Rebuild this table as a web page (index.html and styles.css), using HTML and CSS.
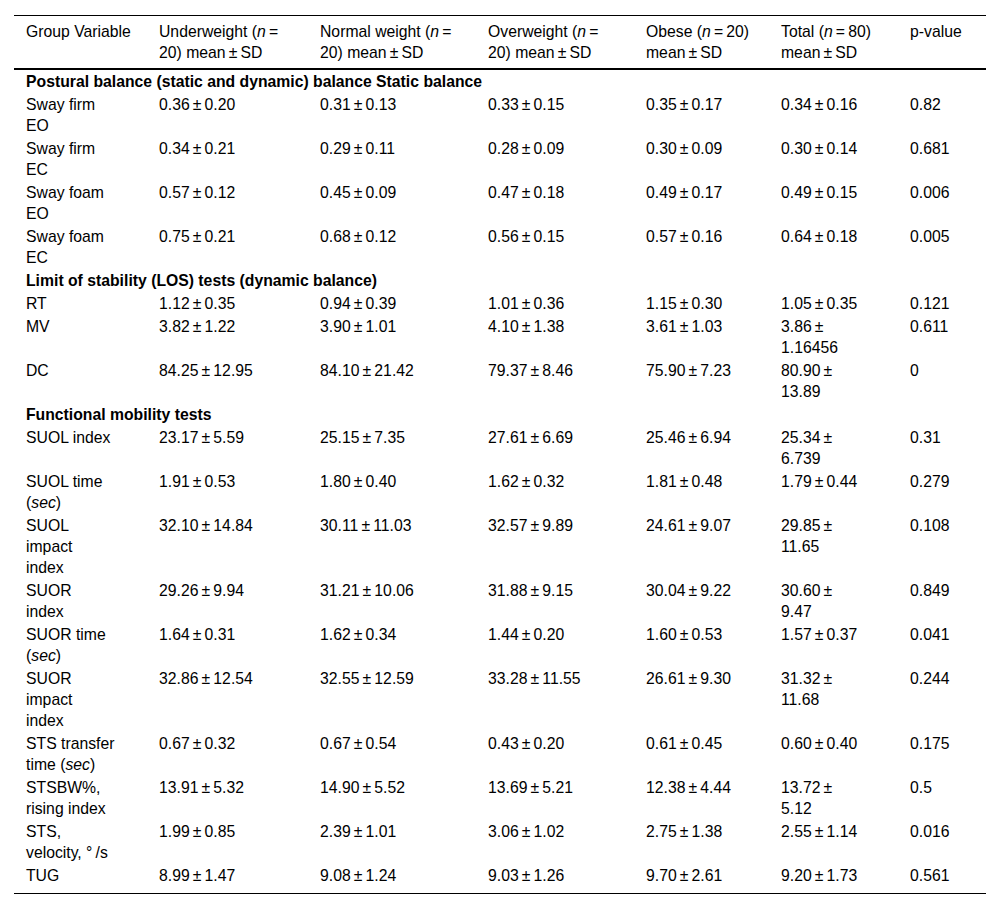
FILE: index.html
```html
<!DOCTYPE html>
<html lang="en">
<head>
<meta charset="utf-8">
<title>Table</title>
<link rel="stylesheet" href="styles.css">
</head>
<body>
<div class="page">
<table class="tbl">
<colgroup>
<col class="w1"><col class="w2"><col class="w3"><col class="w4"><col class="w5"><col class="w6"><col class="w7">
</colgroup>
<thead>
<tr>
<th class="nowrap">Group Variable</th>
<th>Underweight (<i>n</i>&thinsp;=&thinsp;20) mean&thinsp;±&thinsp;SD</th>
<th>Normal weight (<i>n</i>&thinsp;=&thinsp;20) mean&thinsp;±&thinsp;SD</th>
<th>Overweight (<i>n</i>&thinsp;=&thinsp;20) mean&thinsp;±&thinsp;SD</th>
<th>Obese (<i>n</i>&thinsp;=&thinsp;20) mean&thinsp;±&thinsp;SD</th>
<th>Total (<i>n</i>&thinsp;=&thinsp;80) mean&thinsp;±&thinsp;SD</th>
<th>p-value</th>
</tr>
</thead>
<tbody>
<tr class="section"><td colspan="7">Postural balance (static and dynamic) balance Static balance</td></tr>
<tr><td>Sway firm<br>EO</td><td>0.36&thinsp;±&thinsp;0.20</td><td>0.31&thinsp;±&thinsp;0.13</td><td>0.33&thinsp;±&thinsp;0.15</td><td>0.35&thinsp;±&thinsp;0.17</td><td>0.34&thinsp;±&thinsp;0.16</td><td>0.82</td></tr>
<tr><td>Sway firm<br>EC</td><td>0.34&thinsp;±&thinsp;0.21</td><td>0.29&thinsp;±&thinsp;0.11</td><td>0.28&thinsp;±&thinsp;0.09</td><td>0.30&thinsp;±&thinsp;0.09</td><td>0.30&thinsp;±&thinsp;0.14</td><td>0.681</td></tr>
<tr><td>Sway foam<br>EO</td><td>0.57&thinsp;±&thinsp;0.12</td><td>0.45&thinsp;±&thinsp;0.09</td><td>0.47&thinsp;±&thinsp;0.18</td><td>0.49&thinsp;±&thinsp;0.17</td><td>0.49&thinsp;±&thinsp;0.15</td><td>0.006</td></tr>
<tr><td>Sway foam<br>EC</td><td>0.75&thinsp;±&thinsp;0.21</td><td>0.68&thinsp;±&thinsp;0.12</td><td>0.56&thinsp;±&thinsp;0.15</td><td>0.57&thinsp;±&thinsp;0.16</td><td>0.64&thinsp;±&thinsp;0.18</td><td>0.005</td></tr>
<tr class="section"><td colspan="7">Limit of stability (LOS) tests (dynamic balance)</td></tr>
<tr><td>RT</td><td>1.12&thinsp;±&thinsp;0.35</td><td>0.94&thinsp;±&thinsp;0.39</td><td>1.01&thinsp;±&thinsp;0.36</td><td>1.15&thinsp;±&thinsp;0.30</td><td>1.05&thinsp;±&thinsp;0.35</td><td>0.121</td></tr>
<tr><td>MV</td><td>3.82&thinsp;±&thinsp;1.22</td><td>3.90&thinsp;±&thinsp;1.01</td><td>4.10&thinsp;±&thinsp;1.38</td><td>3.61&thinsp;±&thinsp;1.03</td><td>3.86&thinsp;±&thinsp;1.16456</td><td>0.611</td></tr>
<tr><td>DC</td><td>84.25&thinsp;±&thinsp;12.95</td><td>84.10&thinsp;±&thinsp;21.42</td><td>79.37&thinsp;±&thinsp;8.46</td><td>75.90&thinsp;±&thinsp;7.23</td><td>80.90&thinsp;±&thinsp;13.89</td><td>0</td></tr>
<tr class="section"><td colspan="7">Functional mobility tests</td></tr>
<tr><td>SUOL index</td><td>23.17&thinsp;±&thinsp;5.59</td><td>25.15&thinsp;±&thinsp;7.35</td><td>27.61&thinsp;±&thinsp;6.69</td><td>25.46&thinsp;±&thinsp;6.94</td><td>25.34&thinsp;±&thinsp;6.739</td><td>0.31</td></tr>
<tr><td>SUOL time<br>(<i>sec</i>)</td><td>1.91&thinsp;±&thinsp;0.53</td><td>1.80&thinsp;±&thinsp;0.40</td><td>1.62&thinsp;±&thinsp;0.32</td><td>1.81&thinsp;±&thinsp;0.48</td><td>1.79&thinsp;±&thinsp;0.44</td><td>0.279</td></tr>
<tr><td>SUOL<br>impact<br>index</td><td>32.10&thinsp;±&thinsp;14.84</td><td>30.11&thinsp;±&thinsp;11.03</td><td>32.57&thinsp;±&thinsp;9.89</td><td>24.61&thinsp;±&thinsp;9.07</td><td>29.85&thinsp;±&thinsp;11.65</td><td>0.108</td></tr>
<tr><td>SUOR<br>index</td><td>29.26&thinsp;±&thinsp;9.94</td><td>31.21&thinsp;±&thinsp;10.06</td><td>31.88&thinsp;±&thinsp;9.15</td><td>30.04&thinsp;±&thinsp;9.22</td><td>30.60&thinsp;±&thinsp;9.47</td><td>0.849</td></tr>
<tr><td>SUOR time<br>(<i>sec</i>)</td><td>1.64&thinsp;±&thinsp;0.31</td><td>1.62&thinsp;±&thinsp;0.34</td><td>1.44&thinsp;±&thinsp;0.20</td><td>1.60&thinsp;±&thinsp;0.53</td><td>1.57&thinsp;±&thinsp;0.37</td><td>0.041</td></tr>
<tr><td>SUOR<br>impact<br>index</td><td>32.86&thinsp;±&thinsp;12.54</td><td>32.55&thinsp;±&thinsp;12.59</td><td>33.28&thinsp;±&thinsp;11.55</td><td>26.61&thinsp;±&thinsp;9.30</td><td>31.32&thinsp;±&thinsp;11.68</td><td>0.244</td></tr>
<tr><td>STS transfer<br>time (<i>sec</i>)</td><td>0.67&thinsp;±&thinsp;0.32</td><td>0.67&thinsp;±&thinsp;0.54</td><td>0.43&thinsp;±&thinsp;0.20</td><td>0.61&thinsp;±&thinsp;0.45</td><td>0.60&thinsp;±&thinsp;0.40</td><td>0.175</td></tr>
<tr><td>STSBW%,<br>rising index</td><td>13.91&thinsp;±&thinsp;5.32</td><td>14.90&thinsp;±&thinsp;5.52</td><td>13.69&thinsp;±&thinsp;5.21</td><td>12.38&thinsp;±&thinsp;4.44</td><td>13.72&thinsp;±&thinsp;5.12</td><td>0.5</td></tr>
<tr><td>STS,<br>velocity, °&thinsp;/s</td><td>1.99&thinsp;±&thinsp;0.85</td><td>2.39&thinsp;±&thinsp;1.01</td><td>3.06&thinsp;±&thinsp;1.02</td><td>2.75&thinsp;±&thinsp;1.38</td><td>2.55&thinsp;±&thinsp;1.14</td><td>0.016</td></tr>
<tr class="last"><td>TUG</td><td>8.99&thinsp;±&thinsp;1.47</td><td>9.08&thinsp;±&thinsp;1.24</td><td>9.03&thinsp;±&thinsp;1.26</td><td>9.70&thinsp;±&thinsp;2.61</td><td>9.20&thinsp;±&thinsp;1.73</td><td>0.561</td></tr>
</tbody>
</table>
</div>
</body>
</html>
```
FILE: styles.css
```css
html, body {
  margin: 0;
  padding: 0;
  background: #ffffff;
}

body {
  font-family: "Liberation Sans", Arial, sans-serif;
  font-size: 15.75px;
  color: #000000;
}

.page {
  padding: 15px 14px 0 14px;
}

.tbl {
  width: 972px;
  table-layout: fixed;
  border-collapse: separate;
  border-spacing: 0;
  border-top: 1px solid #000000;
  border-bottom: 1px solid #000000;
  line-height: 21px;
}

.w1 { width: 133px; }
.w2 { width: 161px; }
.w3 { width: 168px; }
.w4 { width: 158px; }
.w5 { width: 135px; }
.w6 { width: 129px; }
.w7 { width: 88px; }

.tbl th {
  font-weight: normal;
  text-align: left;
  vertical-align: top;
  padding: 5px 12px 5px 12px;
  border-bottom: 2px solid #000000;
}

.tbl th.nowrap {
  white-space: nowrap;
}

.tbl td {
  text-align: left;
  vertical-align: top;
  padding: 1px 14px 1px 12px;
}

.tbl td:nth-child(1) {
  padding-right: 24px;
}

.tbl td:nth-child(6) {
  padding-right: 36px;
}

.section td {
  font-weight: bold;
}

.last td {
  padding-bottom: 7px;
}
```
